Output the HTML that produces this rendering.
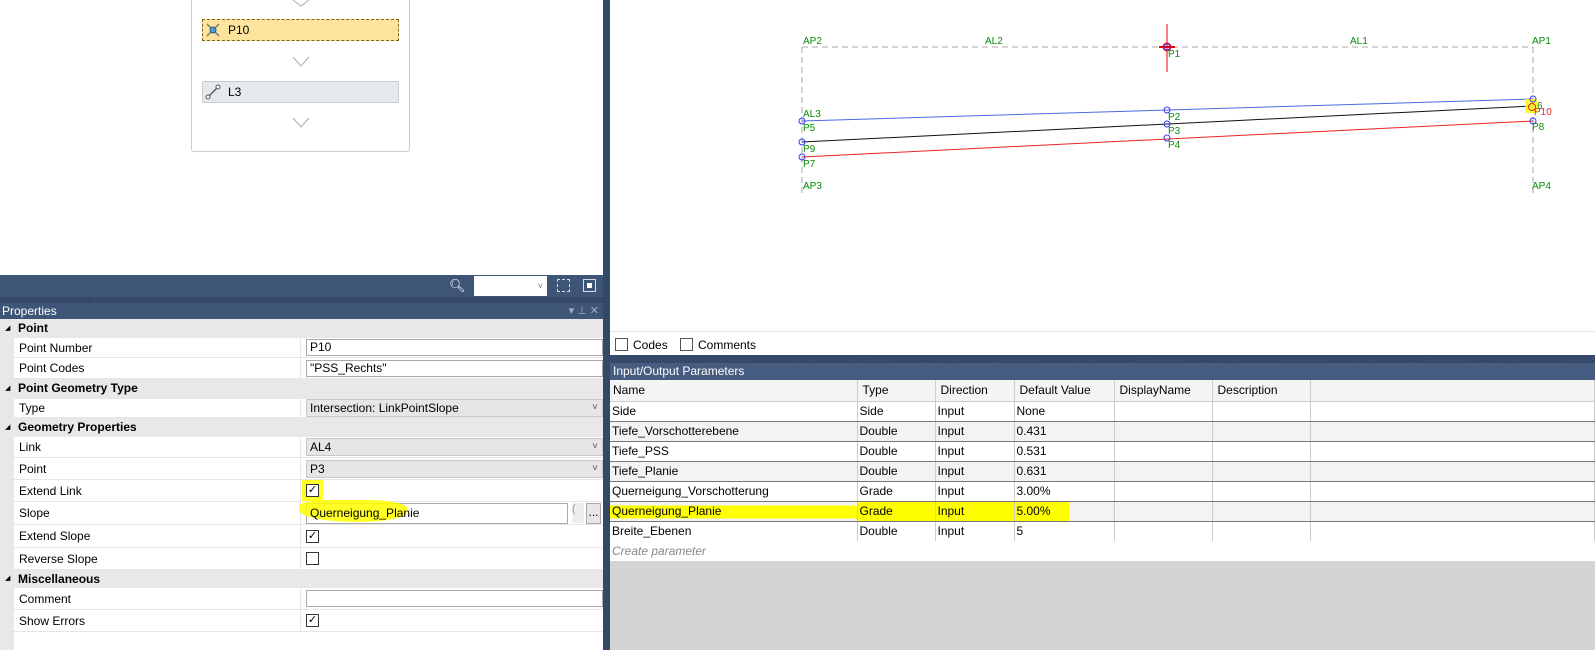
<!DOCTYPE html>
<html><head><meta charset="utf-8"><style>
*{box-sizing:border-box;margin:0;padding:0}
body{width:1595px;height:650px;overflow:hidden;font-family:"Liberation Sans",sans-serif;font-size:12px;color:#000;background:#fff;position:relative}
.abs{position:absolute}
.nav{background:#3f5577}
.hatch{background:repeating-linear-gradient(45deg,#2e4060 0 1px,#3a4e70 1px 3px)}
.cat{background:#e8e8e8;font-weight:bold;height:19px;line-height:19px;padding-left:18px;position:absolute;left:0;width:603px}
.cat:before{content:"◢";position:absolute;left:5px;font-size:7px;top:0;font-weight:normal}
.row{position:absolute;left:0;width:603px;border-bottom:1px solid #e6e6e6;background:#fff}
.row .k{position:absolute;left:0;width:300px;height:100%;border-left:14px solid #e8e8e8;padding-left:5px;display:flex;align-items:center}
.row .v{position:absolute;left:300px;right:0;height:100%;border-left:1px solid #e6e6e6;display:flex;align-items:center;padding-left:5px}
.box{border:1px solid #a8a8a8;height:17px;width:298px;padding-left:3px;line-height:15px;background:#fff}
.sel{border:1px solid #c8c8c8;background:#e6e6e6;height:18px;width:298px;padding-left:3px;line-height:16px;position:relative}
.sel:after{content:"˅";position:absolute;right:4px;top:0;font-size:10px;color:#555}
.cb{width:13px;height:13px;border:1px solid #333;background:#fff;font-size:11px;line-height:11px;text-align:center}
table{border-collapse:collapse;position:absolute;left:610px;top:380px;width:985px;font-size:12px}
td{height:20px;padding-left:2px;border-right:1px solid #ccc;border-bottom:1px solid #777;white-space:nowrap}
tr.h td{height:21px;background:#f4f4f4;border-bottom:1px solid #ccc;padding-left:5px}
tr:nth-child(odd):not(.h) td{background:#f3f3f3}
.green{fill:#0a8a0a;font-size:10px;font-family:"Liberation Sans",sans-serif}
</style></head><body>
<div class="abs" style="left:191px;top:-5px;width:219px;height:157px;border:1px solid #ccc;border-radius:3px;background:#fff"></div>
<svg class="abs" style="left:292px;top:0" width="20" height="8"><polyline points="1,0 9,6 17,0" fill="none" stroke="#aab"/></svg>
<div class="abs" style="left:202px;top:19px;width:197px;height:22px;background:#fde49d;border:1px dashed #806020;line-height:20px;padding-left:25px">P10</div>
<svg class="abs" style="left:205px;top:22px" width="16" height="16"><path d="M2 2L14 14M14 2L2 14" stroke="#777" stroke-width="1.5"/><circle cx="8" cy="8" r="3" fill="#4aa0e0" stroke="#357"/></svg>
<svg class="abs" style="left:292px;top:56px" width="20" height="12"><polyline points="1,1 9,10 17,1" fill="none" stroke="#aab"/></svg>
<div class="abs" style="left:202px;top:81px;width:197px;height:22px;background:#e6e9ec;border:1px solid #c8ccd2;border-radius:2px;line-height:20px;padding-left:25px">L3</div>
<svg class="abs" style="left:205px;top:84px" width="16" height="16"><path d="M3 13L13 3" stroke="#555" stroke-width="1.3"/><circle cx="3" cy="13" r="2" fill="#fff" stroke="#555"/><circle cx="13" cy="3" r="2" fill="#fff" stroke="#555"/></svg>
<svg class="abs" style="left:292px;top:117px" width="20" height="12"><polyline points="1,1 9,10 17,1" fill="none" stroke="#aab"/></svg>

<div class="abs nav" style="left:0;top:275px;width:603px;height:22px"></div>
<div class="abs" style="left:449px;top:278px;color:#fff;font-size:13px">&#x1F50D;&#xFE0E;</div>
<div class="abs" style="left:474px;top:276px;width:73px;height:20px;background:#fff;font-size:9px;color:#777;text-align:right;padding-right:4px;line-height:20px">˅</div>
<div class="abs" style="left:557px;top:279px;width:13px;height:13px;border:1px dashed #ddd"></div>
<div class="abs" style="left:583px;top:279px;width:13px;height:13px;border:1px solid #ddd"><div style="margin:3px;width:5px;height:5px;background:#fff"></div></div>
<div class="abs hatch" style="left:0;top:297px;width:603px;height:6px"></div>
<div class="abs nav" style="left:0;top:303px;width:603px;height:16px;color:#fff;line-height:16px;padding-left:2px">Properties<span style="position:absolute;right:4px;color:#aab;font-size:11px">▾ ⊥ ✕</span></div>
<div class="abs" style="left:0;top:319px;width:603px;height:331px;background:#fff"></div>

<div class="cat" style="top:319px">Point</div>
<div class="row" style="top:338px;height:20px"><div class="k">Point Number</div><div class="v"><div class="box">P10</div></div></div>
<div class="row" style="top:358px;height:21px"><div class="k">Point Codes</div><div class="v"><div class="box">"PSS_Rechts"</div></div></div>
<div class="cat" style="top:379px;height:20px">Point Geometry Type</div>
<div class="row" style="top:399px;height:19px"><div class="k">Type</div><div class="v"><div class="sel">Intersection: LinkPointSlope</div></div></div>
<div class="cat" style="top:418px">Geometry Properties</div>
<div class="row" style="top:437px;height:21px"><div class="k">Link</div><div class="v"><div class="sel">AL4</div></div></div>
<div class="row" style="top:458px;height:22px"><div class="k">Point</div><div class="v"><div class="sel">P3</div></div></div>
<div class="row" style="top:480px;height:22px"><div class="k">Extend Link</div><div class="v"><div class="cb" style="box-shadow:0 0 0 4px rgba(255,255,0,.85)">✓</div></div></div>
<div class="row" style="top:502px;height:23px"><div class="k">Slope</div><div class="v"><div class="box" style="width:262px;height:21px;line-height:19px;position:relative;overflow:visible"><div style="position:absolute;left:-8px;top:-4px;width:108px;height:22px;background:rgba(255,255,0,.85);border-radius:30% 40% 50% 60%"></div><span style="position:relative">Querneigung_Planie</span></div><div style="margin-left:4px;width:12px;height:20px;background:#eee;color:#999;font-size:11px">(</div><div style="margin-left:2px;width:15px;height:21px;border:1px solid #aaa;background:#e6e6e6;text-align:center;line-height:16px">...</div></div></div>
<div class="row" style="top:525px;height:23px"><div class="k">Extend Slope</div><div class="v"><div class="cb">✓</div></div></div>
<div class="row" style="top:548px;height:22px"><div class="k">Reverse Slope</div><div class="v"><div class="cb"></div></div></div>
<div class="cat" style="top:570px;height:18px;line-height:18px">Miscellaneous</div>
<div class="row" style="top:588px;height:22px"><div class="k">Comment</div><div class="v"><div class="box">&nbsp;</div></div></div>
<div class="row" style="top:610px;height:22px"><div class="k">Show Errors</div><div class="v"><div class="cb">✓</div></div></div>
<div class="abs" style="left:0;top:632px;width:14px;height:18px;background:#e8e8e8"></div>

<div class="abs nav" style="left:603px;top:0;width:7px;height:650px;background:#34486a"></div>

<svg class="abs" style="left:610px;top:0" width="985" height="331">
<g transform="translate(-610,0)">
<path d="M802 47H1533M802 47V194M1533 47V194" stroke="#aaa" stroke-dasharray="6,4" fill="none"/>
<line x1="1167" y1="24" x2="1167" y2="72" stroke="#e00"/>
<line x1="1159" y1="47" x2="1175" y2="47" stroke="#e00" stroke-width="2"/>
<circle cx="1167" cy="47" r="4" fill="none" stroke="#e00"/><circle cx="1167" cy="47" r="3" fill="none" stroke="#33f"/>
<line x1="802" y1="121" x2="1533" y2="99" stroke="#4a6ae0"/>
<line x1="802" y1="142" x2="1533" y2="106" stroke="#111"/>
<line x1="802" y1="157" x2="1533" y2="121" stroke="#e22"/>
<rect x="1525" y="99" width="12" height="14" fill="#ff0" opacity=".8"/>
<g fill="none" stroke="#33f"><circle cx="802" cy="121" r="3"/><circle cx="802" cy="142" r="3"/><circle cx="802" cy="157" r="3"/><circle cx="1167" cy="110" r="3"/><circle cx="1167" cy="124" r="3"/><circle cx="1167" cy="138" r="3"/><circle cx="1533" cy="99" r="3"/><circle cx="1533" cy="121" r="3"/></g>
<circle cx="1532" cy="107" r="3.5" fill="none" stroke="#e22"/>
<g class="green"><text x="803" y="44">AP2</text><text x="985" y="44">AL2</text><text x="1350" y="44">AL1</text><text x="1532" y="44">AP1</text><text x="1168" y="57">P1</text>
<text x="803" y="117">AL3</text><text x="803" y="131">P5</text><text x="803" y="152">P9</text><text x="803" y="167">P7</text><text x="1168" y="120">P2</text><text x="1168" y="134">P3</text><text x="1168" y="148">P4</text>
<text x="1537" y="109">6</text><text x="1532" y="130">P8</text><text x="803" y="189">AP3</text><text x="1532" y="189">AP4</text></g>
<text x="1534" y="115" fill="#e22" font-size="10" font-family="Liberation Sans">P10</text>
</g></svg>

<div class="abs" style="left:610px;top:331px;width:985px;height:24px;background:#fff;border-top:1px solid #e3e3e3"></div>
<div class="abs cb" style="left:615px;top:338px;border-color:#555"></div><div class="abs" style="left:633px;top:338px">Codes</div>
<div class="abs cb" style="left:680px;top:338px;border-color:#555"></div><div class="abs" style="left:698px;top:338px">Comments</div>
<div class="abs hatch" style="left:610px;top:355px;width:985px;height:8px"></div>
<div class="abs nav" style="left:610px;top:363px;width:985px;height:17px;color:#fff;line-height:17px;padding-left:3px;background:#465c80">Input/Output Parameters</div>

<table>
<colgroup><col style="width:247px"><col style="width:78px"><col style="width:79px"><col style="width:100px"><col style="width:98px"><col style="width:98px"><col></colgroup>
<tr class="h"><td style="padding-left:3px">Name</td><td>Type</td><td>Direction</td><td>Default Value</td><td>DisplayName</td><td>Description</td><td></td></tr>
<tr><td style="background:#fff">Side</td><td style="background:#fff">Side</td><td style="background:#fff">Input</td><td style="background:#fff">None</td><td style="background:#fff"></td><td style="background:#fff"></td><td style="background:#fff"></td></tr>
<tr><td>Tiefe_Vorschotterebene</td><td>Double</td><td>Input</td><td>0.431</td><td></td><td></td><td></td></tr>
<tr><td>Tiefe_PSS</td><td>Double</td><td>Input</td><td>0.531</td><td></td><td></td><td></td></tr>
<tr><td>Tiefe_Planie</td><td>Double</td><td>Input</td><td>0.631</td><td></td><td></td><td></td></tr>
<tr><td>Querneigung_Vorschotterung</td><td>Grade</td><td>Input</td><td>3.00%</td><td></td><td></td><td></td></tr>
<tr><td style="background:linear-gradient(#f3f3f3 20%,#ff0 20%,#ff0 90%,#f3f3f3 90%)">Querneigung_Planie</td><td style="background:#ff0">Grade</td><td style="background:#ff0">Input</td><td style="background:linear-gradient(90deg,#ff0 55%,#f3f3f3 55%)">5.00%</td><td></td><td></td><td></td></tr>
<tr><td>Breite_Ebenen</td><td>Double</td><td>Input</td><td>5</td><td></td><td></td><td></td></tr>
</table>
<div class="abs" style="left:610px;top:541px;width:985px;height:20px;background:#fff;color:#888;font-style:italic;line-height:20px;padding-left:2px">Create parameter</div>
<div class="abs" style="left:610px;top:561px;width:985px;height:89px;background:#d4d4d4"></div>
</body></html>
